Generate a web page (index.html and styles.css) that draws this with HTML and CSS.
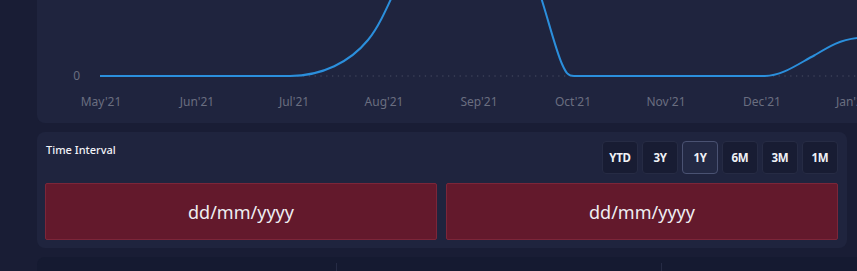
FILE: index.html
```html
<!DOCTYPE html>
<html>
<head>
<meta charset="utf-8">
<link rel="stylesheet" href="styles.css">
</head>
<body>
<div class="page">
  <main class="content">
    <section class="card chart-card">
      <svg class="chart" width="820" height="135" viewBox="37 -12 820 135">
        <text class="axis" x="80" y="80" text-anchor="end">0</text>
        <line class="grid" x1="100" y1="76" x2="857" y2="76"/>
        <path class="curve" d="M100,76 L290,76 C322,76 350,62 368,40 C378,28 386,10 396,-12"/>
        <path class="curve" d="M538,-12 C548,18 555,48 562,64 C566,73 568,76 574,76 L765,76 C782,76 798,64 815,55 C830,46 840,40 857,38"/>
        <text class="axis" x="101" y="106" text-anchor="middle">May'21</text>
        <text class="axis" x="197" y="106" text-anchor="middle">Jun'21</text>
        <text class="axis" x="294" y="106" text-anchor="middle">Jul'21</text>
        <text class="axis" x="384" y="106" text-anchor="middle">Aug'21</text>
        <text class="axis" x="479" y="106" text-anchor="middle">Sep'21</text>
        <text class="axis" x="573" y="106" text-anchor="middle">Oct'21</text>
        <text class="axis" x="666" y="106" text-anchor="middle">Nov'21</text>
        <text class="axis" x="762" y="106" text-anchor="middle">Dec'21</text>
        <text class="axis" x="836" y="106">Jan'22</text>
      </svg>
    </section>
    <section class="card interval-card">
      <div class="interval-head">
        <h3 class="title">Time Interval</h3>
        <div class="ranges">
          <button class="range">YTD</button>
          <button class="range">3Y</button>
          <button class="range active">1Y</button>
          <button class="range">6M</button>
          <button class="range">3M</button>
          <button class="range">1M</button>
        </div>
      </div>
      <div class="dates">
        <div class="date-input">dd/mm/yyyy</div>
        <div class="date-input">dd/mm/yyyy</div>
      </div>
    </section>
    <section class="bottom-card">
      <div class="cell"></div>
      <div class="cell"></div>
      <div class="cell"></div>
    </section>
  </main>
</div>
</body>
</html>
```
FILE: styles.css
```css
html, body {
  margin: 0;
  padding: 0;
  background: #191d35;
  overflow: hidden;
  width: 857px;
  height: 271px;
  font-family: "Noto Sans", "Open Sans", sans-serif;
}
.page {
  padding-left: 37px;
}
.content {
  display: flex;
  flex-direction: column;
  gap: 9px;
  margin-top: -12px;
}
.card {
  background: #1f243e;
  border-radius: 8px;
}
.chart-card {
  width: 830px;
  height: 135px;
  overflow: hidden;
}
.chart {
  display: block;
}
.axis {
  font-size: 12px;
  fill: #6a6e80;
  font-family: "Noto Sans", sans-serif;
}
.grid {
  stroke: #3a3f57;
  stroke-width: 1.3;
  stroke-dasharray: 1.3 4.5;
}
.curve {
  fill: none;
  stroke: #2b8fdc;
  stroke-width: 2;
}
.interval-card {
  width: 810px;
  height: 116px;
  box-sizing: border-box;
  padding: 9px 9px 8px 8px;
  display: flex;
  flex-direction: column;
  gap: 9px;
}
.interval-head {
  display: flex;
  justify-content: space-between;
  align-items: flex-start;
  height: 33px;
}
.title {
  margin: 1px 0 0 1px;
  font-size: 11px;
  font-weight: 500;
  color: #f2f3f8;
}
.ranges {
  display: flex;
  gap: 4px;
}
.range {
  width: 36px;
  height: 33px;
  box-sizing: border-box;
  background: #181c33;
  border: 1px solid #262b44;
  border-radius: 4px;
  color: #f0f1f6;
  font-family: "Noto Sans", sans-serif;
  font-weight: 700;
  font-size: 11.5px;
  padding: 0;
  letter-spacing: -0.3px;
}
.range.active {
  background: #232944;
  border-color: #4a5272;
}
.dates {
  display: flex;
  gap: 9px;
}
.date-input {
  flex: 1;
  height: 57px;
  box-sizing: border-box;
  background: #63192c;
  border: 1px solid #7b2639;
  border-radius: 2px;
  color: #eeeef2;
  font-size: 18px;
  display: flex;
  align-items: center;
  justify-content: center;
}
.bottom-card {
  width: 830px;
  height: 14px;
  background: #151a31;
  border-radius: 8px 8px 0 0;
  display: grid;
  grid-template-columns: 299px 325px 1fr;
  padding-top: 6px;
  box-sizing: border-box;
}
.cell + .cell {
  border-left: 1px solid #262b45;
}
```
